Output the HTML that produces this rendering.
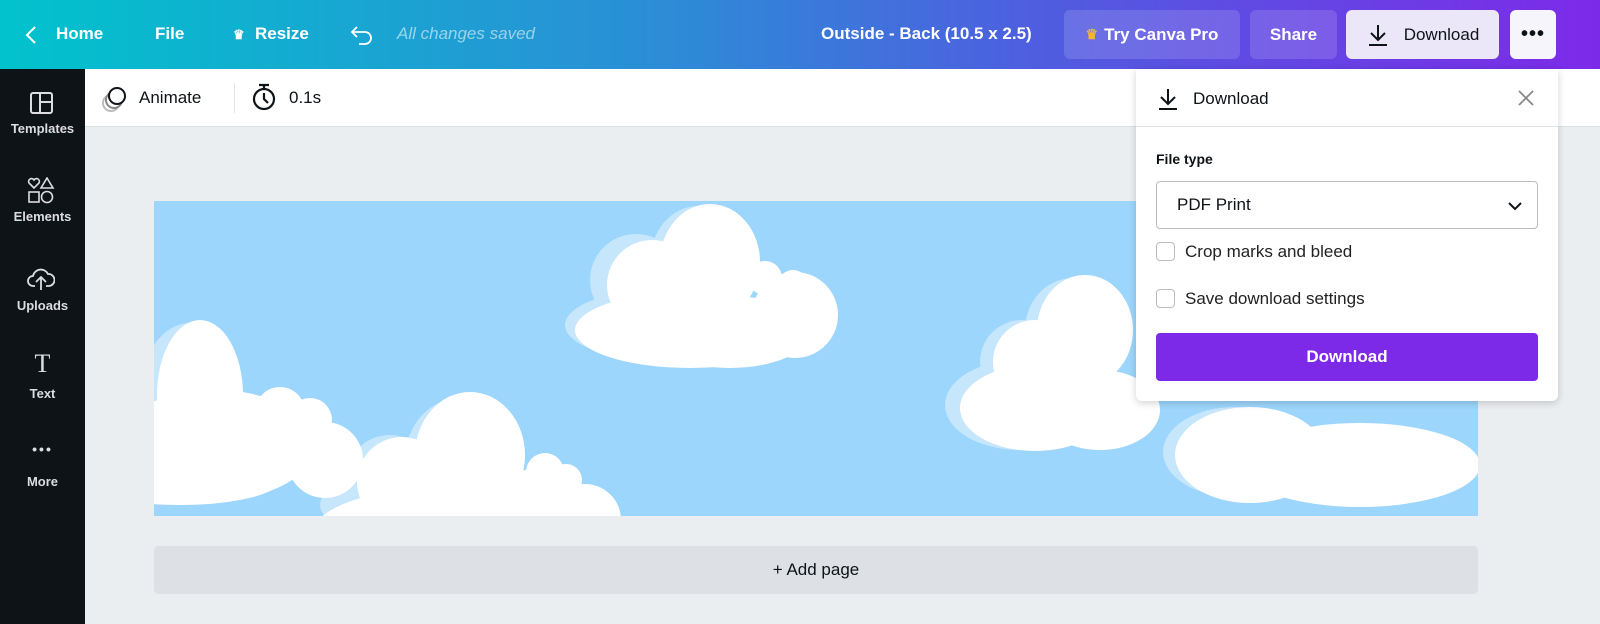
<!DOCTYPE html>
<html><head><meta charset="utf-8"><style>
*{box-sizing:border-box;margin:0;padding:0}
body{width:1600px;height:624px;overflow:hidden;background:#ebeef1;font-family:"Liberation Sans",sans-serif;position:relative}
.top{position:absolute;left:0;top:0;width:1600px;height:69px;background:linear-gradient(90deg,#01c3cc 0%,#2a8fd6 40%,#4f5de0 65%,#7d2ae8 100%);color:#fff;font-weight:bold;font-size:17px}
.top span{position:absolute;top:24px}
.btn{position:absolute;top:10px;height:49px;border-radius:6px;display:flex;align-items:center;justify-content:center;font-size:17px;font-weight:bold}
.side{position:absolute;left:0;top:69px;width:85px;height:555px;background:#0e1318;color:#dcdde0;font-size:13px;font-weight:bold}
.side div{position:absolute;width:85px;text-align:center}
.tool{position:absolute;left:85px;top:69px;width:1515px;height:58px;background:#fff;border-bottom:1px solid #dde1e5;font-size:17px;color:#0e1318}
.panel{position:absolute;left:1136px;top:69px;width:422px;height:332px;background:#fff;border-radius:0 0 6px 6px;box-shadow:0 2px 8px rgba(0,0,0,.18);color:#222}
</style></head><body>
<div class="top">
<svg style="position:absolute;left:24px;top:25px" width="14" height="20"><path d="M11 2 L3 10 L11 18" fill="none" stroke="#fff" stroke-width="2"/></svg>
<span style="left:56px">Home</span><span style="left:155px">File</span>
<span style="left:233px;font-size:13px;top:27px">♛</span><span style="left:255px">Resize</span>
<svg style="position:absolute;left:349px;top:24px" width="26" height="22"><path d="M8 3 L3 8 L8 13 M3 8 H16 a6 6 0 0 1 0 12 H10" fill="none" stroke="#fff" stroke-width="1.8"/></svg>
<span style="left:397px;font-weight:normal;font-style:italic;color:rgba(255,255,255,.55)">All changes saved</span>
<span style="left:821px">Outside - Back (10.5 x 2.5)</span>
<div class="btn" style="left:1064px;width:176px;background:rgba(255,255,255,.14)"><span style="position:static;color:#f5b532;font-size:14px;margin-right:6px">♛</span>Try Canva Pro</div>
<div class="btn" style="left:1250px;width:87px;background:rgba(255,255,255,.14)">Share</div>
<div class="btn" style="left:1346px;width:153px;background:#ece6f9;color:#0e1318;font-weight:normal"><svg width="24" height="24" style="margin-right:14px"><path d="M12 2 V17 M5 10 L12 17 L19 10 M3 22 H21" fill="none" stroke="#0e1318" stroke-width="2"/></svg>Download</div>
<div class="btn" style="left:1510px;width:46px;background:#f7f5fc;color:#0e1318;font-size:20px;letter-spacing:1px">•••</div>
</div>
<div class="side">
<svg style="position:absolute;left:30px;top:23px" width="23" height="22"><rect x="1" y="1" width="21" height="20" rx="2" fill="none" stroke="#dcdde0" stroke-width="2"/><path d="M10 1 V21 M10 10 H22" stroke="#dcdde0" stroke-width="2"/></svg>
<div style="top:52px">Templates</div>
<svg style="position:absolute;left:27px;top:108px" width="28" height="28" fill="none" stroke="#dcdde0" stroke-width="1.6"><path d="M7 11 L2 6 a2.7 2.7 0 0 1 5-3 a2.7 2.7 0 0 1 5 3z"/><path d="M20 1 L26 11 H14z"/><rect x="2" y="15" width="10" height="10"/><circle cx="20" cy="20" r="5.5"/></svg>
<div style="top:140px">Elements</div>
<svg style="position:absolute;left:27px;top:197px" width="28" height="26" fill="none" stroke="#dcdde0" stroke-width="1.8"><path d="M8 20 H6 a5 5 0 0 1 0-10 a8 8 0 0 1 15-2 a6 6 0 0 1 1 12 H19 M14 24 V12 M9 16 L14 11 L19 16"/></svg>
<div style="top:229px">Uploads</div>
<div style="top:280px;font-size:26px;font-weight:normal;font-family:'Liberation Serif',serif">T</div>
<div style="top:317px">Text</div>
<div style="top:372px;font-size:14px;letter-spacing:2px">•••</div>
<div style="top:405px">More</div>
</div>
<div class="tool">
<svg style="position:absolute;left:16px;top:16px" width="28" height="28" fill="none" stroke-width="2"><circle cx="10" cy="18" r="8" stroke="#bbb"/><circle cx="13" cy="15" r="8" stroke="#888" fill="#fff"/><circle cx="16" cy="11" r="8" stroke="#0e1318" fill="#fff"/></svg>
<span style="position:absolute;left:54px;top:19px">Animate</span>
<div style="position:absolute;left:149px;top:14px;width:1px;height:30px;background:#e3e5e8"></div>
<svg style="position:absolute;left:166px;top:14px" width="26" height="28" fill="none" stroke="#0e1318" stroke-width="2.2"><path d="M8 2 H18 M13 2 V6"/><circle cx="13" cy="16" r="10"/><path d="M13 10 V16 L17 20"/></svg>
<span style="position:absolute;left:204px;top:19px">0.1s</span>
</div>
<svg style="position:absolute;left:154px;top:201px" width="1324" height="315" viewBox="154 201 1324 315">
<rect x="154" y="201" width="1324" height="315" fill="#9dd6fc"/>
<g fill="#c6e6fc">
<ellipse cx="698" cy="262" rx="48" ry="56"/><circle cx="636" cy="280" r="46"/><ellipse cx="665" cy="325" rx="100" ry="36"/>
<ellipse cx="190" cy="395" rx="50" ry="72"/><ellipse cx="460" cy="460" rx="55" ry="62"/><circle cx="390" cy="480" r="45"/><ellipse cx="390" cy="505" rx="70" ry="30"/>
<ellipse cx="1073" cy="330" rx="48" ry="52"/><circle cx="1022" cy="362" r="42"/><ellipse cx="1020" cy="405" rx="75" ry="45"/>
<ellipse cx="1235" cy="452" rx="72" ry="45"/>
</g>
<g fill="#fff">
<ellipse cx="710" cy="262" rx="50" ry="58"/><circle cx="652" cy="285" r="45"/><ellipse cx="690" cy="330" rx="115" ry="38"/><ellipse cx="730" cy="332" rx="80" ry="36"/><circle cx="795" cy="315" r="43"/><circle cx="765" cy="278" r="17"/><circle cx="793" cy="285" r="15"/>
<ellipse cx="200" cy="395" rx="43" ry="75"/><ellipse cx="215" cy="445" rx="100" ry="55"/><circle cx="280" cy="412" r="25"/><circle cx="310" cy="420" r="22"/><circle cx="325" cy="460" r="38"/><ellipse cx="180" cy="480" rx="100" ry="25"/>
<ellipse cx="470" cy="455" rx="55" ry="63"/><circle cx="402" cy="482" r="45"/><ellipse cx="470" cy="530" rx="155" ry="45"/><circle cx="545" cy="472" r="19"/><circle cx="566" cy="480" r="16"/><circle cx="585" cy="520" r="36"/><ellipse cx="530" cy="500" rx="50" ry="30"/>
<ellipse cx="1085" cy="330" rx="48" ry="55"/><circle cx="1035" cy="362" r="42"/><ellipse cx="1035" cy="408" rx="75" ry="43"/><ellipse cx="1100" cy="410" rx="60" ry="40"/>
<ellipse cx="1250" cy="455" rx="75" ry="48"/><ellipse cx="1360" cy="465" rx="120" ry="42"/>
</g>
</svg>
<div style="position:absolute;left:154px;top:546px;width:1324px;height:48px;background:#dde1e5;border-radius:4px;text-align:center;line-height:48px;font-size:17px;color:#0e1318">+ Add page</div>
<div class="panel">
<div style="height:58px;border-bottom:1px solid #e3e5e8;position:relative">
<svg style="position:absolute;left:20px;top:18px" width="24" height="24"><path d="M12 2 V17 M5 10 L12 17 L19 10 M3 22 H21" fill="none" stroke="#0e1318" stroke-width="2"/></svg>
<span style="position:absolute;left:57px;top:20px;font-size:17px;color:#0e1318">Download</span>
<svg style="position:absolute;left:381px;top:20px" width="18" height="18"><path d="M2 2 L16 16 M16 2 L2 16" stroke="#888" stroke-width="1.8"/></svg>
</div>
<div style="position:absolute;left:20px;top:82px;font-size:14px;font-weight:bold;color:#0e1318">File type</div>
<div style="position:absolute;left:20px;top:112px;width:382px;height:48px;border:1px solid #b9bcc1;border-radius:4px;font-size:17px;line-height:46px;padding-left:20px;color:#0e1318">PDF Print
<svg style="position:absolute;right:14px;top:19px" width="16" height="10"><path d="M2 2 L8 8 L14 2" fill="none" stroke="#0e1318" stroke-width="2"/></svg></div>
<div style="position:absolute;left:20px;top:173px;width:19px;height:19px;border:1px solid #b9bcc1;border-radius:4px"></div>
<span style="position:absolute;left:49px;top:173px;font-size:17px">Crop marks and bleed</span>
<div style="position:absolute;left:20px;top:220px;width:19px;height:19px;border:1px solid #b9bcc1;border-radius:4px"></div>
<span style="position:absolute;left:49px;top:220px;font-size:17px">Save download settings</span>
<div style="position:absolute;left:20px;top:264px;width:382px;height:48px;background:#7d2ae8;border-radius:4px;color:#fff;font-weight:bold;font-size:17px;text-align:center;line-height:48px">Download</div>
</div>
</body></html>
